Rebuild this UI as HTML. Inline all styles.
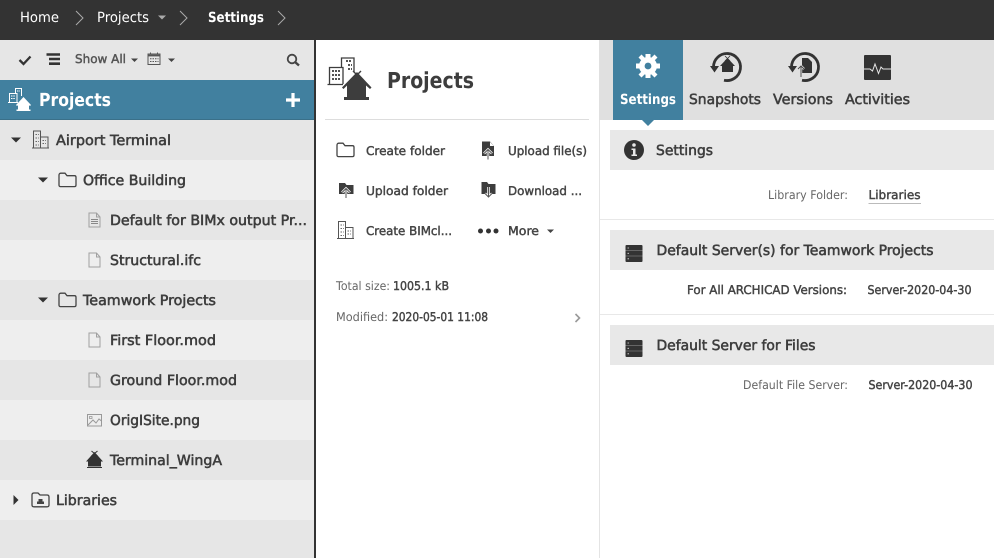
<!DOCTYPE html>
<html><head><meta charset="utf-8"><style>
html,body{margin:0;padding:0;width:994px;height:558px;overflow:hidden;background:#fff}
svg{display:block}
text{font-family:"DejaVu Sans","Liberation Sans",sans-serif;font-size:14px;fill:#3d3d3d}
.b{stroke:#3d3d3d;stroke-width:.55}
.w{fill:#fff}
.w.b{stroke:#fff}
.s{font-size:12px;fill:#444}
.s.b{stroke:#444;stroke-width:.45}
.g{font-size:12px;fill:#666}
.big{font-weight:bold;stroke:none!important}
.o{fill:none;stroke:#444;stroke-width:1.3}
.f{fill:none;stroke:#a0a0a0;stroke-width:1}
</style></head><body>
<svg width="994" height="558" viewBox="0 0 994 558" xmlns="http://www.w3.org/2000/svg" text-rendering="geometricPrecision">
<defs>
<g id="doc"><path class="f" d="M.5.5H8L11.500 4.500V14.500H.5ZM8 .5V4.500H11.500"/></g>
<g id="folder"><path class="o" d="M1 3.200Q1 1.200 3 1.200H7L9 3.700H16.500Q18 3.700 18 5.200V13Q18 14.600 16.500 14.600H2.500Q1 14.600 1 13Z"/></g>
<g id="bld"><path fill="none" stroke="#555" stroke-width="1" d="M1.500 17V.5H8.500V17M8.500 6.500H16V17M0 17.500H17"/><path stroke="#666" stroke-width="1.100" stroke-dasharray="1.500 1.200" d="M3.500 4H7M3.500 7.500H7M3.500 11H7M3.500 14.500H7M10.500 10H14M10.500 13H14"/></g>
<g id="srv"><rect x="0" y="0" width="17" height="17" rx="1" fill="#333"/><path stroke="#999" stroke-width=".6" d="M0 5.500H17M0 11H17"/><path stroke="#ddd" stroke-width=".8" d="M2 3H3.500M2 8.300H3.500M2 13.800H3.500"/></g>
</defs>

<!-- top bar -->
<rect width="994" height="40" fill="#333"/>
<text x="20" y="22" class="w" textLength="39" lengthAdjust="spacingAndGlyphs">Home</text>
<text x="97" y="22" class="w" textLength="52" lengthAdjust="spacingAndGlyphs">Projects</text>
<text x="208" y="22" class="w big" textLength="56" lengthAdjust="spacingAndGlyphs">Settings</text>
<path d="M76 11L83 18L76 25M180 11L187 18L180 25M278 11L285 18L278 25" fill="none" stroke="#aaa" stroke-width="1"/>
<path d="M158 15.500H166L162 19.500Z" fill="#aaa"/>

<!-- left panel -->
<rect y="40" width="314" height="518" fill="#e6e6e6"/>
<rect x="314" y="40" width="2" height="518" fill="#333"/>
<rect y="160" width="314" height="40" fill="#eee"/>
<rect y="240" width="314" height="40" fill="#eee"/>
<rect y="320" width="314" height="40" fill="#eee"/>
<rect y="400" width="314" height="40" fill="#eee"/>
<rect y="480" width="314" height="40" fill="#eee"/>

<!-- toolbar -->
<path d="M19.500 60L23.500 64L30.500 56.500" fill="none" stroke="#333" stroke-width="2.300"/>
<path d="M46.500 54.500H60M49 59H60M49 63.700H60" stroke="#333" stroke-width="2.600"/>
<text x="75" y="63" class="s b" textLength="51" lengthAdjust="spacingAndGlyphs" style="fill:#555;stroke:#555">Show All</text>
<path d="M131 58.500H138L134.500 62Z" fill="#444"/>
<rect x="148" y="54" width="12" height="10.500" fill="none" stroke="#555" stroke-width="1"/>
<path d="M148 55.500H160" stroke="#555" stroke-width="1.800"/>
<path d="M150.500 52.500V54.500M157.500 52.500V54.500" stroke="#555"/>
<path d="M150 58.800H158.500M150 61.500H158.500" stroke="#555" stroke-dasharray="1.500 1"/>
<path d="M168 58.500H175L171.500 62Z" fill="#444"/>
<circle cx="292" cy="59" r="4.300" fill="none" stroke="#444" stroke-width="1.800"/>
<path d="M295 62L299 65.500" stroke="#444" stroke-width="2.400"/>

<!-- projects bar -->
<rect y="80" width="314" height="40" fill="#41809f"/>
<rect y="119" width="314" height="1" fill="#3a7089"/>
<g fill="none" stroke="#fff" stroke-width="1"><path d="M9.500 102V93.500H17V102M8 102.500H18M15.500 93V88.500H21.500V96"/></g>
<path d="M11 96H15.500M11 98.500H15.500M17 91H20" stroke="#fff" stroke-dasharray="1.500 .8"/>
<path d="M23.500 97L31 105L30 106L29 105.200V109.500H30.500V111H16.500V109.500H18V105.200L17 106L16 105Z" fill="#fff"/>
<text x="39" y="106" class="w big" textLength="72" lengthAdjust="spacingAndGlyphs" style="font-size:18px">Projects</text>
<path d="M293 93V107M286 100H300" stroke="#fff" stroke-width="3.200"/>

<!-- tree -->
<path d="M11 137.500H21L16 142.500Z" fill="#333"/>
<use href="#bld" x="32" y="130.500"/>
<text x="56" y="145" class="b" textLength="115" lengthAdjust="spacingAndGlyphs">Airport Terminal</text>

<path d="M38 177.500H48L43 182.500Z" fill="#333"/>
<use href="#folder" x="58" y="172"/>
<text x="83" y="185" class="b" textLength="103" lengthAdjust="spacingAndGlyphs">Office Building</text>

<use href="#doc" x="88.500" y="212.500"/>
<path d="M91 219.500H98M91 221.500H98M91 223.500H98" stroke="#888"/>
<text x="110" y="225" class="b" textLength="197" lengthAdjust="spacingAndGlyphs">Default for BIMx output Pr...</text>

<use href="#doc" x="88.500" y="252.500"/>
<text x="110" y="265" class="b" textLength="91" lengthAdjust="spacingAndGlyphs">Structural.ifc</text>

<path d="M38 297.500H48L43 302.500Z" fill="#333"/>
<use href="#folder" x="58" y="292"/>
<text x="83" y="305" class="b" textLength="133" lengthAdjust="spacingAndGlyphs">Teamwork Projects</text>

<use href="#doc" x="88.500" y="332.500"/>
<text x="110" y="345" class="b" textLength="106" lengthAdjust="spacingAndGlyphs">First Floor.mod</text>

<use href="#doc" x="88.500" y="372.500"/>
<text x="110" y="385" class="b" textLength="127" lengthAdjust="spacingAndGlyphs">Ground Floor.mod</text>

<rect x="87.500" y="414.500" width="14" height="11.500" fill="none" stroke="#999"/>
<path d="M88 425L93 420L96 423L99 419L101.500 421" fill="none" stroke="#999"/>
<rect x="89.500" y="416.500" width="2.500" height="2" fill="none" stroke="#999" stroke-width=".8"/>
<text x="110" y="425" class="b" textLength="90" lengthAdjust="spacingAndGlyphs">OrigISite.png</text>

<g fill="#333"><path d="M94.500 452L103 461.500L101 461.500V466.500H88V461.500L86 461.500Z"/><path d="M87 467H102V468H87Z"/></g>
<path d="M91.500 451L97.500 456M97.500 451L91.500 456" stroke="#333"/>
<text x="110" y="465" class="b" textLength="112" lengthAdjust="spacingAndGlyphs">Terminal_WingA</text>

<path d="M13.500 495L18.500 500L13.500 505Z" fill="#333"/>
<path class="o" d="M32 495Q32 493 34 493H38L40 495H47Q49 495 49 497V505Q49 506.800 47 506.800H34Q32 506.800 32 505Z"/>
<path d="M37 504H44V501.500H42.500V499H38.500V501.500H37Z" fill="#444"/>
<text x="56" y="505" class="b" textLength="61" lengthAdjust="spacingAndGlyphs">Libraries</text>

<!-- middle -->
<g fill="none" stroke="#3d3d3d" stroke-width="1.300">
<path d="M329.500 84V67.500H343V84M327.500 84.500H343"/>
<path d="M341.500 67V58H354V72"/>
</g>
<path d="M332 71H340M332 75H340M332 79H340M346 61H352M348 65H352M348 69H352" stroke="#3d3d3d" stroke-width="1.800" stroke-dasharray="2 1"/>
<path d="M357 72L371.500 87.500L370 89L366 85.500V97H369V100H344V97H347V85.500L343.500 89L342 87.500Z" fill="#3d3d3d"/>
<path d="M353 71L361 79M361 71L353 79" stroke="#3d3d3d" stroke-width="1.400"/>
<text x="387" y="88" class="big" textLength="87" lengthAdjust="spacingAndGlyphs" style="font-size:22px">Projects</text>
<rect x="325" y="119" width="264" height="1" fill="#ddd"/>

<use href="#folder" x="336" y="142"/>
<text x="366" y="155" class="s b" textLength="79" lengthAdjust="spacingAndGlyphs">Create folder</text>
<text x="508" y="155" class="s b" textLength="79" lengthAdjust="spacingAndGlyphs">Upload file(s)</text>
<path d="M482 141.500H490L494 146V156H482Z" fill="#3d3d3d"/>
<path d="M490 142V146H494" fill="#fff"/>
<path d="M488 159V150M484 153.500L488 149.500L492 153.500" fill="none" stroke="#fff" stroke-width="2.500"/>
<path d="M488 159.500V150M484 153.500L488 149.500L492 153.500" fill="none" stroke="#555" stroke-width="1"/>

<path d="M339 183H345L346.500 185H353.500V194H339Z" fill="#3d3d3d"/>
<path d="M346 198V189M342 192.500L346 188.500L350 192.500" fill="none" stroke="#fff" stroke-width="2.500"/>
<path d="M346 198V189M342 192.500L346 188.500L350 192.500" fill="none" stroke="#555" stroke-width="1"/>
<text x="366" y="195" class="s b" textLength="82" lengthAdjust="spacingAndGlyphs">Upload folder</text>

<path d="M481.500 182H487L488.500 184H495.500V194H481.500Z" fill="#3d3d3d"/>
<path d="M488.500 187V197M485 193.500L488.500 197L492 193.500" fill="none" stroke="#fff" stroke-width="2.500"/>
<path d="M488.500 187V197M485 193.500L488.500 197L492 193.500" fill="none" stroke="#555" stroke-width="1"/>
<text x="508" y="195" class="s b" textLength="74" lengthAdjust="spacingAndGlyphs">Download ...</text>

<use href="#bld" x="337" y="221"/>
<text x="366" y="235" class="s b" textLength="86" lengthAdjust="spacingAndGlyphs">Create BIMcl...</text>
<circle cx="480.500" cy="231" r="2.500" fill="#333"/><circle cx="488.500" cy="231" r="2.500" fill="#333"/><circle cx="496" cy="231" r="2.500" fill="#333"/>
<text x="508" y="235" class="s b" textLength="31" lengthAdjust="spacingAndGlyphs">More</text>
<path d="M547 229.500H554L550.500 233Z" fill="#444"/>

<text x="336" y="290" class="g" textLength="54" lengthAdjust="spacingAndGlyphs">Total size:</text>
<text x="393" y="290" class="s b" textLength="56" lengthAdjust="spacingAndGlyphs">1005.1 kB</text>
<text x="336" y="321" class="g" textLength="52" lengthAdjust="spacingAndGlyphs">Modified:</text>
<text x="392" y="321" class="s b" textLength="96" lengthAdjust="spacingAndGlyphs">2020-05-01 11:08</text>
<path d="M575.500 314L579.500 318L575.500 322" fill="none" stroke="#999" stroke-width="1.600"/>

<!-- right -->
<rect x="599" y="40" width="1" height="518" fill="#e4e4e4"/>
<rect x="599" y="40" width="395" height="80" fill="#e0e0e0"/>
<path d="M613 40H683V120H654L648 126L642 120H613Z" fill="#41809f"/>
<g fill="#fff">
<circle cx="648" cy="66" r="9"/>
<path d="M645.500 54H650.500V58H645.500ZM645.500 74H650.500V78H645.500ZM636 63.500H640V68.500H636ZM656 63.500H660V68.500H656Z"/>
<path d="M638.500 57.500L641.500 54.500L645 58L642 61ZM657.500 57.500L654.500 54.500L651 58L654 61ZM638.500 74.500L641.500 77.500L645 74L642 71ZM657.500 74.500L654.500 77.500L651 74L654 71Z"/>
</g>
<circle cx="648" cy="66" r="3.400" fill="#41809f"/>
<text x="620" y="104" class="w big" textLength="56" lengthAdjust="spacingAndGlyphs">Settings</text>

<path d="M713.500 67A13.500 13.500 0 1 1 724 80.200" fill="none" stroke="#333" stroke-width="2.800"/>
<path d="M710 66H719L714.500 72.500Z" fill="#333"/>
<path d="M727.500 58L735 66H733V72H722V66H720Z" fill="#333"/>
<path d="M725 56L730 61M730 56L725 61" stroke="#333" stroke-width=".8"/>
<text x="689" y="104" class="b" textLength="72" lengthAdjust="spacingAndGlyphs">Snapshots</text>

<path d="M791.500 67A13.500 13.500 0 1 1 802 80.200" fill="none" stroke="#333" stroke-width="2.800"/>
<path d="M788 66H797L792.500 72.500Z" fill="#333"/>
<path d="M802 58H808L812 62V73H802Z" fill="#333"/>
<path d="M801 76V66M798 69L801 66L804 69" fill="none" stroke="#e0e0e0" stroke-width="2.400"/>
<path d="M801 77V66M798 69L801 66L804 69" fill="none" stroke="#444" stroke-width=".9"/>
<text x="773" y="104" class="b" textLength="60" lengthAdjust="spacingAndGlyphs">Versions</text>

<rect x="864" y="55" width="27" height="25" rx="1" fill="#333"/>
<path d="M864 69H870L872.500 71L875 64L878.500 73.500L881 67L883 69H891" fill="none" stroke="#e6e6e6" stroke-width="1"/>
<text x="845" y="104" class="b" textLength="65" lengthAdjust="spacingAndGlyphs">Activities</text>

<!-- sections -->
<rect x="610" y="130" width="384" height="40" fill="#e8e8e8"/>
<circle cx="634" cy="150" r="10" fill="#333"/>
<circle cx="634" cy="145" r="1.800" fill="#e8e8e8"/>
<path d="M631.500 148.500H635.500V154.500H637V156H631.500V154.500H633V150H631.500Z" fill="#e8e8e8"/>
<text x="656" y="155" class="b" textLength="57" lengthAdjust="spacingAndGlyphs">Settings</text>

<text x="768" y="199" class="g" textLength="80" lengthAdjust="spacingAndGlyphs">Library Folder:</text>
<text x="868.500" y="199" class="s b" textLength="52" lengthAdjust="spacingAndGlyphs">Libraries</text>
<rect x="868.500" y="203" width="52.500" height="1" fill="#bbb"/>
<rect x="600" y="219" width="394" height="1" fill="#e8e8e8"/>

<rect x="610" y="230" width="384" height="40" fill="#e8e8e8"/>
<use href="#srv" x="625.500" y="245"/>
<text x="656.500" y="255" class="b" textLength="277" lengthAdjust="spacingAndGlyphs">Default Server(s) for Teamwork Projects</text>
<text x="687" y="294" class="s b" textLength="160" lengthAdjust="spacingAndGlyphs">For All ARCHICAD Versions:</text>
<text x="867.500" y="294" class="s b" textLength="104" lengthAdjust="spacingAndGlyphs">Server-2020-04-30</text>
<rect x="600" y="314" width="394" height="1" fill="#e8e8e8"/>

<rect x="610" y="325" width="384" height="40" fill="#e8e8e8"/>
<use href="#srv" x="625.500" y="340"/>
<text x="656.500" y="350" class="b" textLength="159" lengthAdjust="spacingAndGlyphs">Default Server for Files</text>
<text x="743" y="389" class="g" textLength="105" lengthAdjust="spacingAndGlyphs">Default File Server:</text>
<text x="868.500" y="389" class="s b" textLength="104" lengthAdjust="spacingAndGlyphs">Server-2020-04-30</text>
</svg>
</body></html>
